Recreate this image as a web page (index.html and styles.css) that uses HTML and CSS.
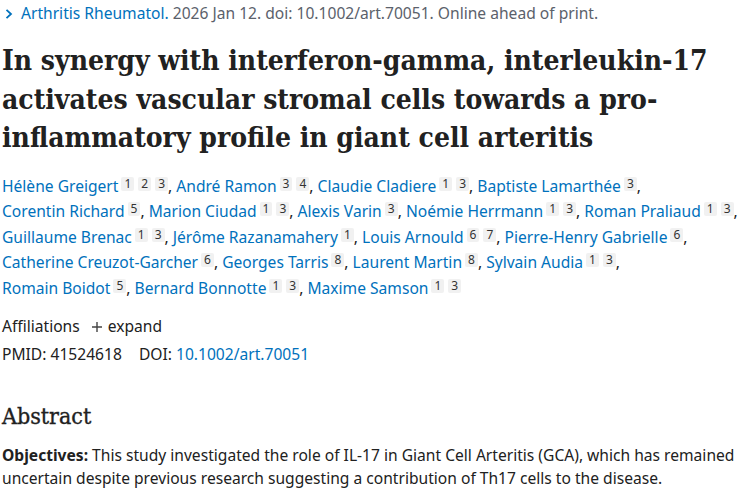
FILE: index.html
```html
<!DOCTYPE html>
<html>
<head>
<meta charset="utf-8">
<link rel="stylesheet" href="styles.css">
</head>
<body>
<main class="article">
  <div class="cit">
    <span class="chev"><svg width="10" height="12" viewBox="0 0 10 12"><path d="M2.5 1.8 L7 6 L2.5 10.2" fill="none" stroke="#0071bc" stroke-width="1.8"/></svg></span><a class="journal" href="#">Arthritis Rheumatol.</a> 2026 Jan 12. doi: 10.1002/art.70051. Online ahead of print.
  </div>
  <h1 class="title">In synergy with interferon-gamma, interleukin-17 activates vascular stromal cells towards a pro-inflammatory profile in giant cell arteritis</h1>
  <div class="authors">
    <span class="au"><a href="#">Hélène Greigert</a><sup><span class="aff">1</span><span class="aff">2</span><span class="aff">3</span></sup>,</span>
    <span class="au"><a href="#">André Ramon</a><sup><span class="aff">3</span><span class="aff">4</span></sup>,</span>
    <span class="au"><a href="#">Claudie Cladiere</a><sup><span class="aff">1</span><span class="aff">3</span></sup>,</span>
    <span class="au"><a href="#">Baptiste Lamarthée</a><sup><span class="aff">3</span></sup>,</span>
    <span class="au"><a href="#">Corentin Richard</a><sup><span class="aff">5</span></sup>,</span>
    <span class="au"><a href="#">Marion Ciudad</a><sup><span class="aff">1</span><span class="aff">3</span></sup>,</span>
    <span class="au"><a href="#">Alexis Varin</a><sup><span class="aff">3</span></sup>,</span>
    <span class="au"><a href="#">Noémie Herrmann</a><sup><span class="aff">1</span><span class="aff">3</span></sup>,</span>
    <span class="au"><a href="#">Roman Praliaud</a><sup><span class="aff">1</span><span class="aff">3</span></sup>,</span>
    <span class="au"><a href="#">Guillaume Brenac</a><sup><span class="aff">1</span><span class="aff">3</span></sup>,</span>
    <span class="au"><a href="#">Jérôme Razanamahery</a><sup><span class="aff">1</span></sup>,</span>
    <span class="au"><a href="#">Louis Arnould</a><sup><span class="aff">6</span><span class="aff">7</span></sup>,</span>
    <span class="au"><a href="#">Pierre-Henry Gabrielle</a><sup><span class="aff">6</span></sup>,</span>
    <span class="au"><a href="#">Catherine Creuzot-Garcher</a><sup><span class="aff">6</span></sup>,</span>
    <span class="au"><a href="#">Georges Tarris</a><sup><span class="aff">8</span></sup>,</span>
    <span class="au"><a href="#">Laurent Martin</a><sup><span class="aff">8</span></sup>,</span>
    <span class="au"><a href="#">Sylvain Audia</a><sup><span class="aff">1</span><span class="aff">3</span></sup>,</span>
    <span class="au"><a href="#">Romain Boidot</a><sup><span class="aff">5</span></sup>,</span>
    <span class="au"><a href="#">Bernard Bonnotte</a><sup><span class="aff">1</span><span class="aff">3</span></sup>,</span>
    <span class="au"><a href="#">Maxime Samson</a><sup><span class="aff">1</span><span class="aff">3</span></sup></span>
  </div>
  <div class="affil">Affiliations <span class="expand"><svg class="plus" width="12" height="12" viewBox="0 0 12 12"><path d="M6 1 V11 M1 6 H11" stroke="#444" stroke-width="1.4" fill="none"/></svg>expand</span></div>
  <div class="ids">PMID: 41524618 <span class="doi">DOI: <a href="#">10.1002/art.70051</a></span></div>
  <h2 class="abs-h">Abstract</h2>
  <p class="abs"><strong>Objectives:</strong> This study investigated the role of IL-17 in Giant Cell Arteritis (GCA), which has remained uncertain despite previous research suggesting a contribution of Th17 cells to the disease.</p>
</main>
</body>
</html>
```
FILE: styles.css
```css
html, body { margin: 0; padding: 0; background: #fff; }
body {
  font-family: "Noto Sans", "Open Sans", sans-serif;
  font-size: 15.6px;
  color: #212121;
}
a { color: #0071bc; text-decoration: none; }
.article { padding: 0 2px; width: 737px; }
.cit { color: #5b616b; line-height: 26px; height: 26px; }
.chev { display: inline-block; width: 17px; padding-left: 2px; vertical-align: -1px; }
.title {
  font-family: "DejaVu Serif Condensed", "DejaVu Serif", serif;
  font-stretch: condensed;
  font-weight: bold;
  font-size: 28px;
  line-height: 38.5px;
  margin: 16px 0 16px;
  color: #212121;
}
.authors { line-height: 25.5px; }
.au { white-space: nowrap; }
.authors sup { vertical-align: top; font-size: 12px; line-height: 1; position: relative; top: 3px; margin-left: 3px; }
.aff { display: inline-block; background: #f1f1f1; color: #333; padding: 1px 3px; line-height: 12px; border-radius: 2px; }
.aff + .aff { margin-left: 4px; }
.affil { margin-top: 11px; line-height: 28px; }
.expand { margin-left: 7px; }
.plus { vertical-align: -1px; margin-right: 5px; }
.ids { line-height: 28px; }
.doi { margin-left: 13px; }
.abs-h { font-family: "DejaVu Serif Condensed", "DejaVu Serif", serif; font-stretch: condensed; font-weight: 500; font-size: 23px; line-height: 30px; margin: 33px 0 13px; -webkit-text-stroke: 0.35px #212121; }
.abs { margin: 0; line-height: 23px; }
```
